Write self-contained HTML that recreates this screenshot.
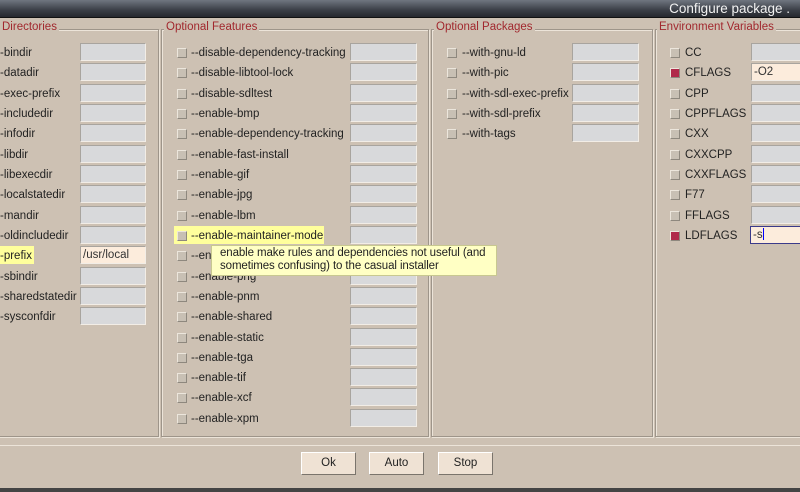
<!DOCTYPE html>
<html><head><meta charset="utf-8"><style>
*{margin:0;padding:0;box-sizing:border-box}
body{width:800px;height:492px;overflow:hidden;background:#cdc1b3;font-family:"Liberation Sans",sans-serif;font-size:11.5px;color:#222;position:relative}
.tb{position:absolute;left:0;top:0;width:800px;height:18px;background:linear-gradient(#707680,#3a3e46 60%,#25282e);border-bottom:1px solid #111}
.tb span{position:absolute;right:10px;top:1px;color:#f2f2f2;font-size:13.5px}
.box{position:absolute;top:29px;height:408px;border:1px solid #9e958a;box-shadow:inset 1px 1px 0 #ece4d9,1px 1px 0 #ece4d9}
.lg{position:absolute;top:21px;background:#cdc1b3;color:#a1282e;font-size:11.5px;padding:0 2px}
.r{position:absolute;height:18px;line-height:20px;white-space:nowrap}
.f{position:absolute;height:18px;background:#d8d9db;border:1px solid #a8a49e;border-right-color:#f2ede6;border-bottom-color:#f2ede6;font-size:11.5px;line-height:16px;padding-left:2px;color:#333}
.f.on{background:#fcecdc}
.cb{position:absolute;width:10px;height:10px;margin-top:1px;background:#c8c0b4;border:1px solid #ece6dc;border-right-color:#8e887e;border-bottom-color:#8e887e}
.cb.on{background:#b02a4a}
.btn{position:absolute;top:452px;width:55px;height:23px;background:#efe2d4;border:1px solid #fff;border-right-color:#7a746c;border-bottom-color:#7a746c;text-align:center;line-height:21px;font-size:11.5px}
.tip{position:absolute;left:211px;top:245px;width:286px;height:31px;background:#ffffc4;border:1px solid #c8c890;padding:1px 0 0 8px;line-height:13px;font-size:11.5px;letter-spacing:-0.1px}
</style></head><body>
<div class="tb"><span>Configure package .</span></div>
<div style="position:absolute;left:0;top:445px;width:800px;height:1px;background:#ece4d9"></div>
<div style="position:absolute;left:0;top:488px;width:800px;height:4px;background:#444"></div>

<div class="box" style="left:-2px;width:161px"></div><div class="lg" style="left:0">Directories</div>
<div class="box" style="left:161px;width:268px"></div><div class="lg" style="left:164px">Optional Features</div>
<div class="box" style="left:431px;width:222px"></div><div class="lg" style="left:434px">Optional Packages</div>
<div class="box" style="left:655px;width:150px"></div><div class="lg" style="left:657px">Environment Variables</div>

<!-- Directories -->
<div class="r" style="left:0;top:43px">-bindir</div><div class="f" style="left:80px;top:43px;width:66px"></div>
<div class="r" style="left:0;top:63px">-datadir</div><div class="f" style="left:80px;top:63px;width:66px"></div>
<div class="r" style="left:0;top:84px">-exec-prefix</div><div class="f" style="left:80px;top:84px;width:66px"></div>
<div class="r" style="left:0;top:104px">-includedir</div><div class="f" style="left:80px;top:104px;width:66px"></div>
<div class="r" style="left:0;top:124px">-infodir</div><div class="f" style="left:80px;top:124px;width:66px"></div>
<div class="r" style="left:0;top:145px">-libdir</div><div class="f" style="left:80px;top:145px;width:66px"></div>
<div class="r" style="left:0;top:165px">-libexecdir</div><div class="f" style="left:80px;top:165px;width:66px"></div>
<div class="r" style="left:0;top:185px">-localstatedir</div><div class="f" style="left:80px;top:185px;width:66px"></div>
<div class="r" style="left:0;top:206px">-mandir</div><div class="f" style="left:80px;top:206px;width:66px"></div>
<div class="r" style="left:0;top:226px">-oldincludedir</div><div class="f" style="left:80px;top:226px;width:66px"></div>
<div class="r" style="left:0;top:246px;background:#ffff9c;padding-right:2px">-prefix</div><div class="f on" style="left:80px;top:246px;width:66px">/usr/local</div>
<div class="r" style="left:0;top:267px">-sbindir</div><div class="f" style="left:80px;top:267px;width:66px"></div>
<div class="r" style="left:0;top:287px">-sharedstatedir</div><div class="f" style="left:80px;top:287px;width:66px"></div>
<div class="r" style="left:0;top:307px">-sysconfdir</div><div class="f" style="left:80px;top:307px;width:66px"></div>

<!-- Features -->
<div class="cb" style="left:177px;top:47px"></div><div class="r" style="left:191px;top:43px">--disable-dependency-tracking</div><div class="f" style="left:350px;top:43px;width:67px"></div>
<div class="cb" style="left:177px;top:67px"></div><div class="r" style="left:191px;top:63px">--disable-libtool-lock</div><div class="f" style="left:350px;top:63px;width:67px"></div>
<div class="cb" style="left:177px;top:88px"></div><div class="r" style="left:191px;top:84px">--disable-sdltest</div><div class="f" style="left:350px;top:84px;width:67px"></div>
<div class="cb" style="left:177px;top:108px"></div><div class="r" style="left:191px;top:104px">--enable-bmp</div><div class="f" style="left:350px;top:104px;width:67px"></div>
<div class="cb" style="left:177px;top:128px"></div><div class="r" style="left:191px;top:124px">--enable-dependency-tracking</div><div class="f" style="left:350px;top:124px;width:67px"></div>
<div class="cb" style="left:177px;top:149px"></div><div class="r" style="left:191px;top:145px">--enable-fast-install</div><div class="f" style="left:350px;top:145px;width:67px"></div>
<div class="cb" style="left:177px;top:169px"></div><div class="r" style="left:191px;top:165px">--enable-gif</div><div class="f" style="left:350px;top:165px;width:67px"></div>
<div class="cb" style="left:177px;top:189px"></div><div class="r" style="left:191px;top:185px">--enable-jpg</div><div class="f" style="left:350px;top:185px;width:67px"></div>
<div class="cb" style="left:177px;top:210px"></div><div class="r" style="left:191px;top:206px">--enable-lbm</div><div class="f" style="left:350px;top:206px;width:67px"></div>
<div style="position:absolute;left:174px;top:226px;width:150px;height:18px;background:#ffff9c"></div>
<div class="cb" style="left:177px;top:230px"></div><div class="r" style="left:191px;top:226px">--enable-maintainer-mode</div><div class="f" style="left:350px;top:226px;width:67px"></div>
<div class="cb" style="left:177px;top:250px"></div><div class="r" style="left:191px;top:246px">--enable-pcx</div><div class="f" style="left:350px;top:246px;width:67px"></div>
<div class="cb" style="left:177px;top:271px"></div><div class="r" style="left:191px;top:267px">--enable-png</div><div class="f" style="left:350px;top:267px;width:67px"></div>
<div class="cb" style="left:177px;top:291px"></div><div class="r" style="left:191px;top:287px">--enable-pnm</div><div class="f" style="left:350px;top:287px;width:67px"></div>
<div class="cb" style="left:177px;top:311px"></div><div class="r" style="left:191px;top:307px">--enable-shared</div><div class="f" style="left:350px;top:307px;width:67px"></div>
<div class="cb" style="left:177px;top:332px"></div><div class="r" style="left:191px;top:328px">--enable-static</div><div class="f" style="left:350px;top:328px;width:67px"></div>
<div class="cb" style="left:177px;top:352px"></div><div class="r" style="left:191px;top:348px">--enable-tga</div><div class="f" style="left:350px;top:348px;width:67px"></div>
<div class="cb" style="left:177px;top:372px"></div><div class="r" style="left:191px;top:368px">--enable-tif</div><div class="f" style="left:350px;top:368px;width:67px"></div>
<div class="cb" style="left:177px;top:392px"></div><div class="r" style="left:191px;top:388px">--enable-xcf</div><div class="f" style="left:350px;top:388px;width:67px"></div>
<div class="cb" style="left:177px;top:413px"></div><div class="r" style="left:191px;top:409px">--enable-xpm</div><div class="f" style="left:350px;top:409px;width:67px"></div>

<!-- Packages -->
<div class="cb" style="left:447px;top:47px"></div><div class="r" style="left:462px;top:43px">--with-gnu-ld</div><div class="f" style="left:572px;top:43px;width:67px"></div>
<div class="cb" style="left:447px;top:67px"></div><div class="r" style="left:462px;top:63px">--with-pic</div><div class="f" style="left:572px;top:63px;width:67px"></div>
<div class="cb" style="left:447px;top:88px"></div><div class="r" style="left:462px;top:84px">--with-sdl-exec-prefix</div><div class="f" style="left:572px;top:84px;width:67px"></div>
<div class="cb" style="left:447px;top:108px"></div><div class="r" style="left:462px;top:104px">--with-sdl-prefix</div><div class="f" style="left:572px;top:104px;width:67px"></div>
<div class="cb" style="left:447px;top:128px"></div><div class="r" style="left:462px;top:124px">--with-tags</div><div class="f" style="left:572px;top:124px;width:67px"></div>

<!-- Env -->
<div class="cb" style="left:670px;top:47px"></div><div class="r" style="left:685px;top:43px">CC</div><div class="f" style="left:751px;top:43px;width:60px"></div>
<div class="cb on" style="left:670px;top:67px"></div><div class="r" style="left:685px;top:63px">CFLAGS</div><div class="f on" style="left:751px;top:63px;width:60px">-O2</div>
<div class="cb" style="left:670px;top:88px"></div><div class="r" style="left:685px;top:84px">CPP</div><div class="f" style="left:751px;top:84px;width:60px"></div>
<div class="cb" style="left:670px;top:108px"></div><div class="r" style="left:685px;top:104px">CPPFLAGS</div><div class="f" style="left:751px;top:104px;width:60px"></div>
<div class="cb" style="left:670px;top:128px"></div><div class="r" style="left:685px;top:124px">CXX</div><div class="f" style="left:751px;top:124px;width:60px"></div>
<div class="cb" style="left:670px;top:149px"></div><div class="r" style="left:685px;top:145px">CXXCPP</div><div class="f" style="left:751px;top:145px;width:60px"></div>
<div class="cb" style="left:670px;top:169px"></div><div class="r" style="left:685px;top:165px">CXXFLAGS</div><div class="f" style="left:751px;top:165px;width:60px"></div>
<div class="cb" style="left:670px;top:189px"></div><div class="r" style="left:685px;top:185px">F77</div><div class="f" style="left:751px;top:185px;width:60px"></div>
<div class="cb" style="left:670px;top:210px"></div><div class="r" style="left:685px;top:206px">FFLAGS</div><div class="f" style="left:751px;top:206px;width:60px"></div>
<div class="cb on" style="left:670px;top:230px"></div><div class="r" style="left:685px;top:226px">LDFLAGS</div><div class="f on" style="left:750px;top:226px;width:60px;border:1px solid #3a3a8a">-s<span style="display:inline-block;width:1px;height:12px;background:#00f;vertical-align:-2px"></span></div>

<div class="tip">enable make rules and dependencies not useful (and<br>sometimes confusing) to the casual installer</div>

<div class="btn" style="left:301px">Ok</div>
<div class="btn" style="left:369px">Auto</div>
<div class="btn" style="left:438px">Stop</div>
</body></html>
